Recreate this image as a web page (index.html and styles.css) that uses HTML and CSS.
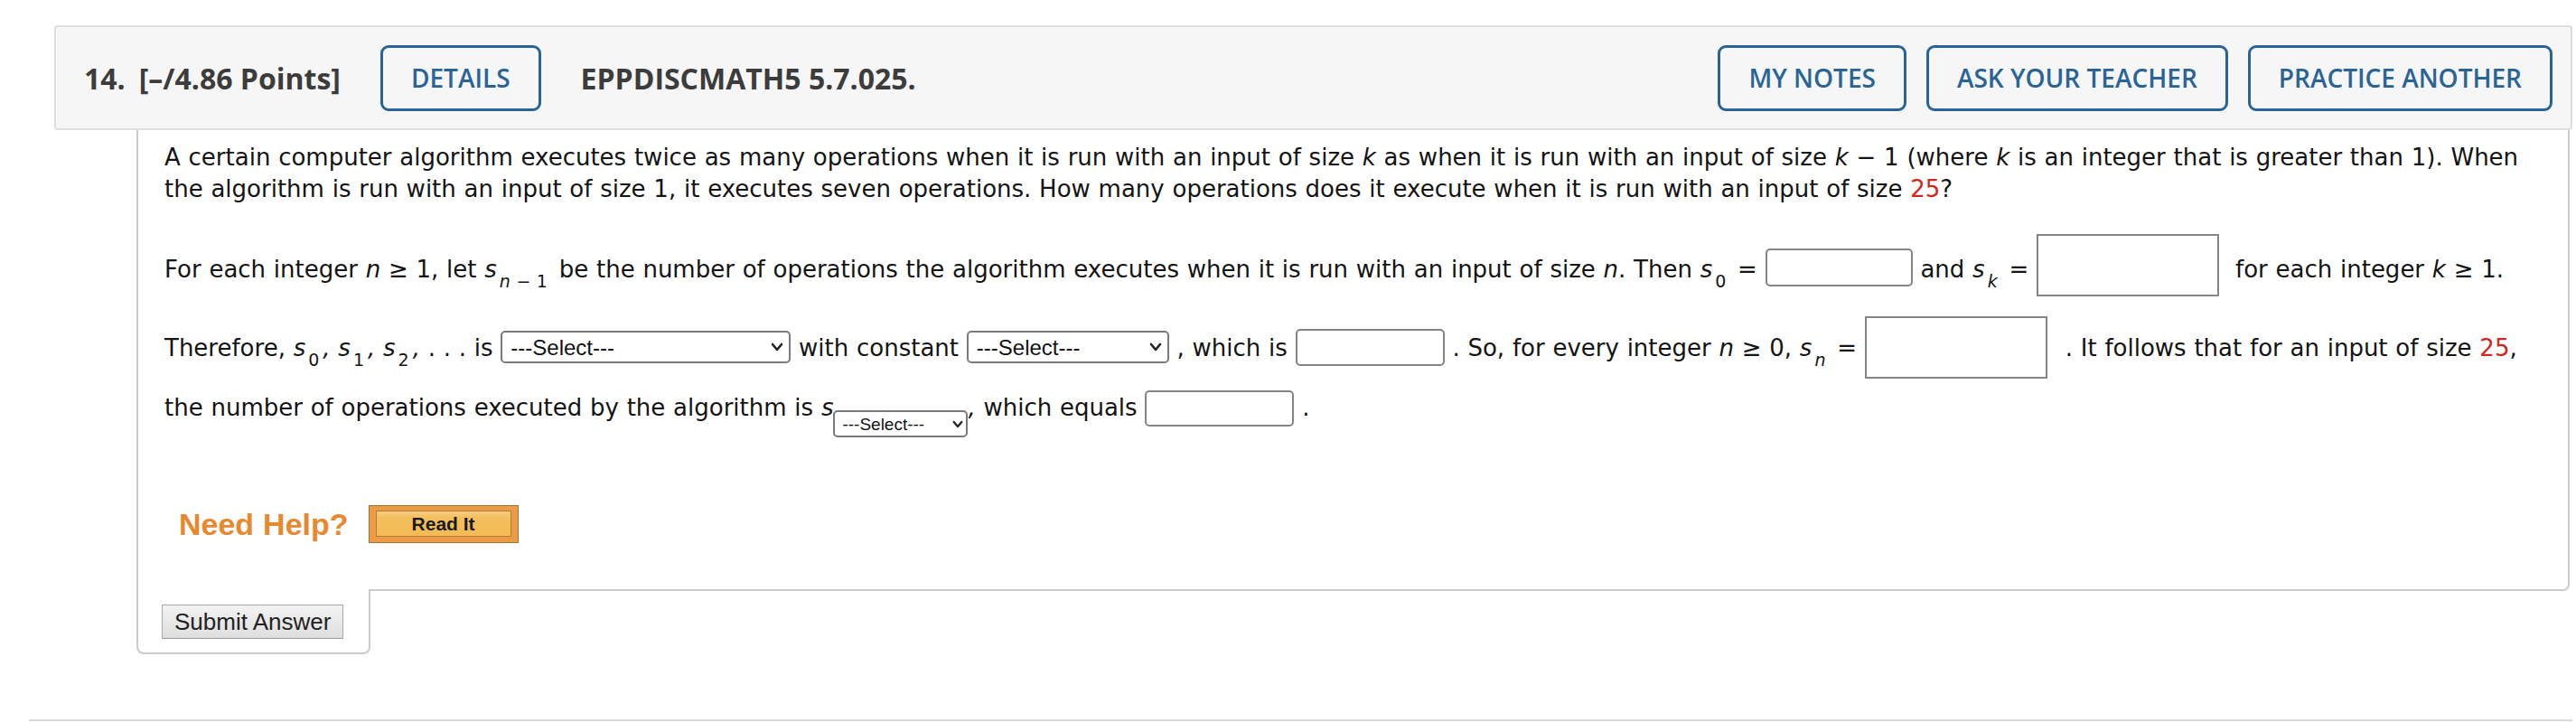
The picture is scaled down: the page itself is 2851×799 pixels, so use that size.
FILE: index.html
```html
<!DOCTYPE html>
<html lang="en">
<head>
<meta charset="utf-8">
<title>EPPDISCMATH5 5.7.025</title>
<link rel="stylesheet" href="styles.css">
</head>
<body>
<div class="page">
  <div class="qhead">
    <span class="qnum">14.</span>
    <span class="pts">[–/4.86 Points]</span>
    <button class="hbtn details">DETAILS</button>
    <span class="qcode">EPPDISCMATH5 5.7.025.</span>
    <div class="hactions">
      <button class="hbtn">MY NOTES</button>
      <button class="hbtn">ASK YOUR TEACHER</button>
      <button class="hbtn">PRACTICE ANOTHER</button>
    </div>
  </div>
  <div class="qwrap">
    <div class="qbody">
      <p class="prob">A certain computer algorithm executes twice as many operations when it is run with an input of size <i class="v">k</i> as when it is run with an input of size <i class="v">k</i> − 1 (where <i class="v">k</i> is an integer that is greater than 1). When<br>the algorithm is run with an input of size 1, it executes seven operations. How many operations does it execute when it is run with an input of size <span class="red">25</span>?</p>
      <div class="row r2">For each integer <i class="v">n</i> ≥ 1, let <i class="v">s</i><span class="sb"><i class="v">n</i> − 1</span> be the number of operations the algorithm executes when it is run with an input of size <i class="v">n</i>. Then <i class="v">s</i><span class="sb">0</span> = <input class="box s0" type="text"> and <i class="v">s</i><span class="sb"><i class="v">k</i></span> = <input class="big bk" type="text"><span class="gap"></span>for each integer <i class="v">k</i> ≥ 1.</div>
      <div class="row r3">Therefore, <i class="v">s</i><span class="sb">0</span><i class="v">,</i> <i class="v">s</i><span class="sb">1</span><i class="v">,</i> <i class="v">s</i><span class="sb">2</span><i class="v">,</i> . . . is <span class="sel sel1"><select><option>---Select---</option></select><svg class="chev" viewBox="0 0 14 10" width="14" height="10"><polyline points="2,2 7,8 12,2" fill="none" stroke="#222" stroke-width="2.6" stroke-linecap="round" stroke-linejoin="round"/></svg></span> with constant <span class="sel sel2"><select><option>---Select---</option></select><svg class="chev" viewBox="0 0 14 10" width="14" height="10"><polyline points="2,2 7,8 12,2" fill="none" stroke="#222" stroke-width="2.6" stroke-linecap="round" stroke-linejoin="round"/></svg></span> , which is <input class="box r3box" type="text"> . So, for every integer <i class="v">n</i> ≥ 0, <i class="v">s</i><span class="sb"><i class="v">n</i></span> = <input class="big bn" type="text"><span class="gap2"></span>. It follows that for an input of size <span class="red">25</span>,</div>
      <div class="row r4">the number of operations executed by the algorithm is <i class="v">s</i><span class="sel sel3"><select><option>---Select---</option></select><svg class="chev small" viewBox="0 0 14 10" width="12" height="9"><polyline points="2,2 7,8 12,2" fill="none" stroke="#222" stroke-width="2.6" stroke-linecap="round" stroke-linejoin="round"/></svg></span><i class="v">,</i> which equals <input class="box r4box" type="text"> .</div>
      <div class="help">
        <span class="needhelp">Need Help?</span>
        <button class="readit"><span class="ri-in">Read It</span></button>
      </div>
    </div>
    <div class="tab"><button class="submit">Submit Answer</button></div>
  </div>
  <div class="nexthead"></div>
</div>
</body>
</html>
```
FILE: styles.css
```css
html, body {
  margin: 0;
  background: #ffffff;
  overflow: hidden;
}
body {
  font-family: "DejaVu Sans", Verdana, sans-serif;
}
.page {
  padding: 28px 4px 0 60px;
}
.qhead {
  display: flex;
  align-items: center;
  height: 116px;
  box-sizing: border-box;
  background: #f6f6f6;
  border: 2px solid #dedede;
  border-radius: 4px;
  padding: 0 20px 0 31px;
  font-family: "Open Sans", sans-serif;
  color: #3c3c3c;
}
.qnum, .pts, .qcode {
  font-size: 32px;
  font-weight: 700;
}
.qnum { margin-right: 15px; }
.pts { margin-right: 44px; }
.hbtn {
  font-family: "Open Sans", sans-serif;
  font-weight: 600;
  font-size: 28px;
  color: #2a6496;
  background: transparent;
  border: 3px solid #2a6496;
  border-radius: 9px;
  height: 73px;
  padding: 0 31px;
  box-sizing: border-box;
  line-height: 1;
}
.details { margin-right: 44px; }
.hactions {
  margin-left: auto;
  display: flex;
  gap: 22px;
}
.qwrap {
  margin: 0 3px 0 91px;
}
.qbody {
  border: 2px solid #cbcbcb;
  border-top: none;
  border-bottom-right-radius: 7px;
  padding: 12.5px 20px 51px 29px;
  color: #141414;
  font-size: 26px;
  line-height: 35px;
  word-spacing: 0.5px;
}
.prob { margin: 0; }
.row { white-space: nowrap; }
.r2 { margin-top: 32.5px; }
.r3 { margin-top: 10.5px; }
.r4 { margin-top: 9.5px; }
.v { font-style: italic; }
.red { color: #d0281e; }
.sb {
  font-size: 19px;
  line-height: 1;
  vertical-align: -11px;
  padding: 0 4px 0 3px;
}
.box, .big {
  box-sizing: border-box;
  vertical-align: middle;
  background: #fff;
  font-family: "Liberation Sans", Arial, sans-serif;
  font-size: 22px;
  padding: 0 6px;
  margin: 0;
}
.box {
  height: 41px;
  width: 165px;
  border: 2px solid #848484;
  border-radius: 5px;
}
.big {
  width: 202px;
  height: 69px;
  border: 2px solid #858585;
  border-radius: 0;
}
.s0 { width: 163px; height: 42px; margin-bottom: 6px; }
.bk { margin-bottom: 11px; }
.r3box { margin-bottom: 4px; }
.bn { margin-bottom: 4px; }
.r4box { height: 40px; }
.gap { display: inline-block; width: 18px; }
.gap2 { display: inline-block; width: 20px; }
.sel {
  display: inline-flex;
  align-items: center;
  box-sizing: border-box;
  border: 2px solid #7a7a7a;
  border-radius: 5px;
  background: #fff;
  vertical-align: middle;
  word-spacing: 0;
}
.sel select {
  appearance: none;
  -webkit-appearance: none;
  border: none;
  background: transparent;
  outline: none;
  font-family: "Liberation Sans", Arial, sans-serif;
  font-size: 24px;
  color: #111;
  padding: 0 0 0 9px;
  margin: 0;
  flex: 1;
  height: 100%;
}
.chev { flex: none; margin-right: 6px; }
.sel1 { width: 321px; height: 36px; margin-bottom: 4px; }
.sel2 { width: 224px; height: 36px; margin-bottom: 4px; }
.sel3 {
  width: 149px;
  height: 30px;
  vertical-align: -16px;
}
.sel3 select { font-size: 19px; padding-left: 8px; }
.chev.small { margin-right: 3px; }
.help {
  display: flex;
  align-items: center;
  height: 42px;
  margin-top: 75px;
  margin-left: 16px;
}
.needhelp {
  font-family: "Liberation Sans", Arial, sans-serif;
  font-weight: 700;
  font-size: 34px;
  color: #e8892f;
  margin-right: 22px;
}
.readit {
  display: block;
  box-sizing: border-box;
  width: 166px;
  height: 42px;
  padding: 5px 7px 6px 7px;
  margin: 0;
  border: 1px solid #a4723a;
  background: #ec9a43;
}
.ri-in {
  display: flex;
  align-items: center;
  justify-content: center;
  height: 100%;
  box-sizing: border-box;
  border: 1px solid #b27b3b;
  background: linear-gradient(#f7cd86 0%, #f4bf5d 25%, #f3bb55 100%);
  font-family: "Liberation Sans", Arial, sans-serif;
  font-weight: 700;
  font-size: 21px;
  color: #1a1a1a;
}
.tab {
  width: 259px;
  height: 72px;
  box-sizing: border-box;
  margin-top: -2px;
  background: #fff;
  border: 2px solid #cbcbcb;
  border-top: none;
  border-radius: 0 0 8px 8px;
  padding: 17px 0 0 26px;
}
.submit {
  height: 38px;
  margin: 0;
  padding: 0 13px;
  box-sizing: border-box;
  font-family: "Liberation Sans", Arial, sans-serif;
  font-size: 26px;
  color: #222;
  background: linear-gradient(#f3f3f3, #dedede);
  border: 1px solid #a9a9a9;
  border-bottom-color: #9a9a9a;
  border-radius: 0;
}
.nexthead {
  margin: 72px 0 0 -28px;
  height: 40px;
  border-top: 2px solid #dcdcdc;
  background: linear-gradient(#f5f5f5, #ffffff);
}
```
